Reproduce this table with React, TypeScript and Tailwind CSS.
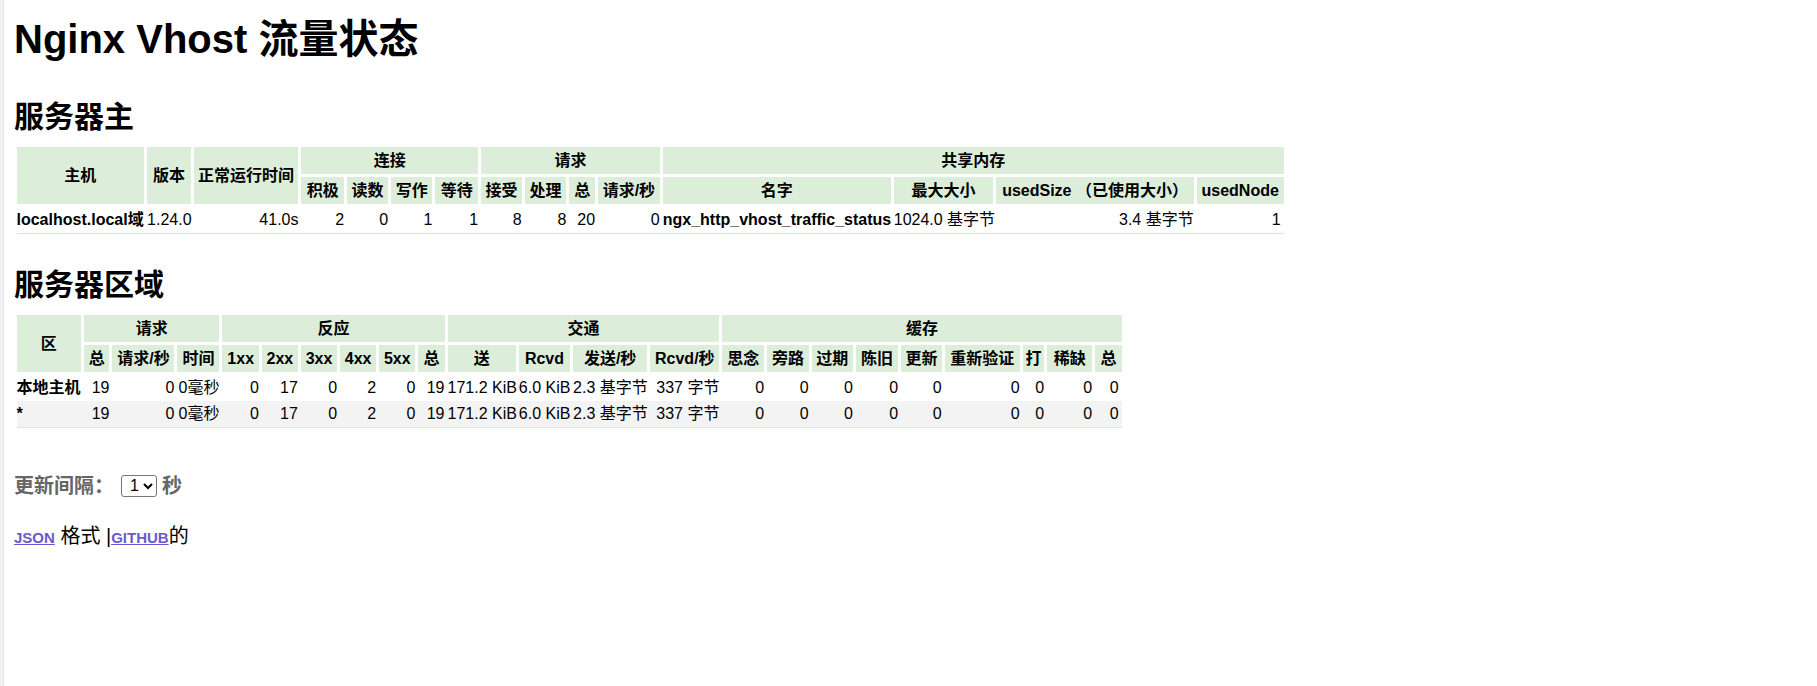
const font = "font-['Liberation_Sans','Noto_Sans_CJK_SC',sans-serif]";

interface GroupHead {
  label: string;
  span: number;
}

interface TableSpec {
  width: string;
  cols: string[];
  fixed: string[];
  groups: GroupHead[];
  subs: string[];
  rows: { cells: string[]; gray?: boolean }[];
  boldCols: number[];
}

const serverTable: TableSpec = {
  width: "w-[1267.1px]",
  cols: [
    "w-[130.6px]", "w-[46.7px]", "w-[107.7px]", "w-[45.6px]", "w-[44px]",
    "w-[44.4px]", "w-[45.6px]", "w-[43.7px]", "w-[44.7px]", "w-[28.6px]",
    "w-[64.7px]", "w-[231px]", "w-[102.7px]", "w-[200.3px]", "w-[86.8px]",
  ],
  fixed: ["主机", "版本", "正常运行时间"],
  groups: [
    { label: "连接", span: 4 },
    { label: "请求", span: 4 },
    { label: "共享内存", span: 4 },
  ],
  subs: [
    "积极", "读数", "写作", "等待", "接受", "处理", "总", "请求/秒",
    "名字", "最大大小", "usedSize （已使用大小）", "usedNode",
  ],
  rows: [
    {
      cells: [
        "localhost.local域", "1.24.0", "41.0s", "2", "0", "1", "1", "8", "8", "20", "0",
        "ngx_http_vhost_traffic_status", "1024.0 基字节", "3.4 基字节", "1",
      ],
    },
  ],
  boldCols: [0, 11],
};

const zoneRow = [
  "19", "0", "0毫秒", "0", "17", "0", "2", "0", "19", "171.2 KiB", "6.0 KiB",
  "2.3 基字节", "337 字节", "0", "0", "0", "0", "0", "0", "0", "0", "0",
];

const zoneTable: TableSpec = {
  width: "w-[1105.2px]",
  cols: [
    "w-[67.7px]", "w-[28.3px]", "w-[65px]", "w-[45px]", "w-[39.4px]", "w-[39px]",
    "w-[39.3px]", "w-[39px]", "w-[39.3px]", "w-[29px]", "w-[71.3px]", "w-[54.3px]",
    "w-[77.1px]", "w-[72.2px]", "w-[44.8px]", "w-[44.4px]", "w-[44.4px]", "w-[45.2px]",
    "w-[43.6px]", "w-[77.9px]", "w-[24.5px]", "w-[48.1px]", "w-[26.4px]",
  ],
  fixed: ["区"],
  groups: [
    { label: "请求", span: 3 },
    { label: "反应", span: 6 },
    { label: "交通", span: 4 },
    { label: "缓存", span: 9 },
  ],
  subs: [
    "总", "请求/秒", "时间", "1xx", "2xx", "3xx", "4xx", "5xx", "总",
    "送", "Rcvd", "发送/秒", "Rcvd/秒", "思念", "旁路", "过期", "陈旧",
    "更新", "重新验证", "打", "稀缺", "总",
  ],
  rows: [
    { cells: ["本地主机", ...zoneRow] },
    { cells: ["*", ...zoneRow], gray: true },
  ],
  boldCols: [0],
};

const th =
  "bg-[#dcedda] border-r-[3px] border-b-[3px] border-white last:border-r-0 py-[3px] leading-[21px] text-center font-bold whitespace-nowrap";

function StatusTable({ spec }: { spec: TableSpec }) {
  return (
    <table
      className={`ml-[2.5px] table-fixed border-separate border-spacing-0 text-[16px] text-black ${spec.width}`}
    >
      <colgroup>
        {spec.cols.map((c, i) => (
          <col key={i} className={c} />
        ))}
      </colgroup>
      <thead>
        <tr>
          {spec.fixed.map((f) => (
            <th key={f} rowSpan={2} className={th}>
              {f}
            </th>
          ))}
          {spec.groups.map((g) => (
            <th key={g.label} colSpan={g.span} className={th}>
              {g.label}
            </th>
          ))}
        </tr>
        <tr>
          {spec.subs.map((s, i) => (
            <th key={i} className={th}>
              {s}
            </th>
          ))}
        </tr>
      </thead>
      <tbody>
        {spec.rows.map((row, ri) => {
          const last = ri === spec.rows.length - 1;
          return (
            <tr key={ri} className={row.gray ? "bg-[#f3f3f3]" : ""}>
              {row.cells.map((c, ci) => {
                const bold = spec.boldCols.includes(ci);
                return (
                  <td
                    key={ci}
                    className={`h-[26px] p-0 leading-[26px] whitespace-nowrap ${
                      bold ? "text-left font-bold" : "pr-[3px] text-right"
                    } ${last ? "border-b border-[#d6e9d4]" : ""}`}
                  >
                    {c}
                  </td>
                );
              })}
            </tr>
          );
        })}
      </tbody>
    </table>
  );
}

export default function App() {
  return (
    <div className={`flex min-h-[686px] bg-white text-black ${font}`}>
      <div className="w-[4px] shrink-0 border-r border-[#e2e2e2] bg-[#f2f2f2]" />
      <main className="flex flex-col items-start pl-[10px]">
        <h1 className="mt-[16px] text-[40px] leading-[46px] font-bold">Nginx Vhost 流量状态</h1>

        <h2 className="mt-[36.5px] text-[30px] leading-[35px] font-bold">服务器主</h2>
        <div className="mt-[13.2px]">
          <StatusTable spec={serverTable} />
        </div>

        <h2 className="mt-[33px] text-[30px] leading-[35px] font-bold">服务器区域</h2>
        <div className="mt-[13.2px]">
          <StatusTable spec={zoneTable} />
        </div>

        <div className="mt-[45.7px] flex h-[24px] items-center text-[20px] font-bold text-[#666]">
          <span>更新间隔：</span>
          <select
            defaultValue="1"
            className="ml-[7px] mr-[5px] h-[22px] w-[36px] rounded-[3px] border border-[#767676] bg-white pl-[4px] text-[16px] font-normal text-black"
          >
            <option value="1">1</option>
            <option value="2">2</option>
            <option value="5">5</option>
            <option value="10">10</option>
          </select>
          <span>秒</span>
        </div>

        <div className="mt-[26px] text-[20px] leading-[24px] text-black">
          <a href="#json" className="text-[15px] font-bold text-[#6a5acd] underline">
            JSON
          </a>{" "}
          格式 |
          <a href="#github" className="text-[15px] font-bold text-[#6a5acd] underline">
            GITHUB
          </a>
          的
        </div>
      </main>
    </div>
  );
}
